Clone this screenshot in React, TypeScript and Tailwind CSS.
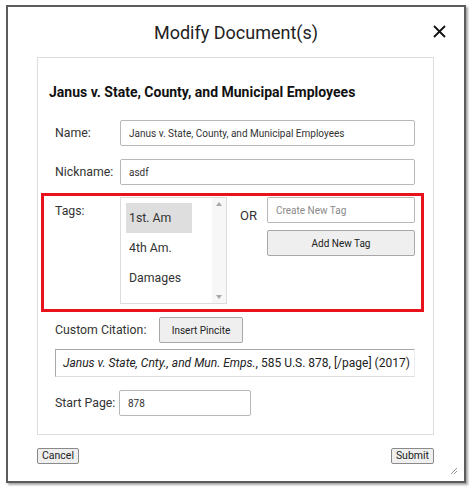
import React from 'react';

const font = "font-['Roboto','Liberation_Sans',sans-serif]";

function TextBox({ value, placeholder, width }: { value?: string; placeholder?: string; width: string }) {
  return (
    <div
      className={`${width} h-[26px] border border-[#b8b8b8] rounded-[2px] bg-white flex items-center px-[8px] text-[10px] text-[#333]`}
    >
      {value ? value : <span className="text-[10px] text-[#8a8a8a]">{placeholder}</span>}
    </div>
  );
}

function Triangle({ up }: { up?: boolean }) {
  return (
    <svg width="6" height="4" viewBox="0 0 6 4">
      <path d={up ? 'M0 4 L3 0 L6 4 Z' : 'M0 0 L3 4 L6 0 Z'} fill="#a8a8a8" />
    </svg>
  );
}

export default function App() {
  const tags = ['1st. Am', '4th Am.', 'Damages'];

  return (
    <div className={`w-[474px] h-[488px] bg-white pt-[5px] pl-[6px] ${font}`}>
      <div className="relative w-[460px] h-[478px] border-2 border-[#5c5c5c] bg-white shadow-[2px_2px_2px_rgba(0,0,0,0.35)]">
        {/* title */}
        <div className="h-[50px] flex items-center justify-center text-[18px] text-[#222]">
          Modify Document(s)
        </div>
        <button className="absolute top-[17px] right-[18px] w-[14px] h-[14px] flex items-center justify-center">
          <svg width="13" height="13" viewBox="0 0 13 13">
            <path d="M1 1 L12 12 M12 1 L1 12" stroke="#111" strokeWidth="1.8" />
          </svg>
        </button>

        {/* form panel */}
        <div className="ml-[29px] w-[397px] h-[378px] border border-[#dddddd] pt-[24px]">
          <div className="ml-[11px] h-[20px] leading-[20px] text-[14px] font-bold text-[#111]">
            Janus v. State, County, and Municipal Employees
          </div>

          <div className="mt-[18px] ml-[17px] flex items-center">
            <div className="w-[65px] text-[12.3px] text-[#333]">Name:</div>
            <TextBox width="w-[295px]" value="Janus v. State, County, and Municipal Employees" />
          </div>

          <div className="mt-[13px] ml-[17px] flex items-center">
            <div className="w-[65px] text-[12.3px] text-[#333]">Nickname:</div>
            <TextBox width="w-[295px]" value="asdf" />
          </div>

          {/* tags, marked in red */}
          <div className="mt-[8px] ml-[3px] w-[383px] h-[119px] border-[3px] border-[#e8121d] pt-[1px] pl-[11px] flex">
            <div className="w-[65px] pt-[4px] text-[12.3px] leading-[20px] text-[#333]">Tags:</div>
            <div className="w-[107px] h-[107px] border border-[#dcdcdc] flex">
              <div className="flex-1 pt-[5px] pl-[5px]">
                {tags.map((t, i) => (
                  <div
                    key={t}
                    className={`h-[30px] w-[66px] flex items-center pl-[3px] text-[12.3px] text-[#333] ${
                      i === 0 ? 'bg-[#dedede]' : ''
                    }`}
                  >
                    {t}
                  </div>
                ))}
              </div>
              <div className="w-[14px] bg-[#f7f7f7] flex flex-col items-center justify-between py-[4px]">
                <Triangle up />
                <Triangle />
              </div>
            </div>
            <div className="ml-[13px] mt-[9px] w-[20px] h-[20px] leading-[20px] text-[13px] text-[#333]">OR</div>
            <div className="ml-[7px] flex flex-col gap-[7px]">
              <TextBox width="w-[148px]" placeholder="Create New Tag" />
              <button className="w-[148px] h-[26px] border border-[#a8a8a8] rounded-[2px] bg-[#efefef] text-[10px] text-[#222]">
                Add New Tag
              </button>
            </div>
          </div>

          <div className="mt-[5px] ml-[17px] flex items-center">
            <div className="w-[104px] text-[12.3px] text-[#333]">Custom Citation:</div>
            <button className="w-[84px] h-[26px] border border-[#a8a8a8] rounded-[2px] bg-[#efefef] text-[10px] text-[#222]">
              Insert Pincite
            </button>
          </div>

          <div className="mt-[6px] ml-[17px] w-[360px] h-[28px] border border-t-[#a9a9a9] border-l-[#a9a9a9] border-r-[#ececec] border-b-[#dedede] flex items-center pl-[7px] text-[12px] text-[#222] whitespace-nowrap overflow-hidden">
            <span className="italic">Janus v. State, Cnty., and Mun. Emps.</span>, 585 U.S. 878, [/page] (2017)
          </div>

          <div className="mt-[13px] ml-[17px] flex items-center">
            <div className="w-[64px] text-[12.3px] text-[#333]">Start Page:</div>
            <TextBox width="w-[132px]" value="878" />
          </div>
        </div>

        {/* footer */}
        <div className="mt-[13px] ml-[29px] w-[397px] flex justify-between">
          <button className="h-[16px] px-[4px] border border-[#8a8a8a] rounded-[2px] bg-[#efefef] text-[10.5px] leading-[14px] text-[#222]">
            Cancel
          </button>
          <button className="h-[16px] px-[4px] border border-[#8a8a8a] rounded-[2px] bg-[#efefef] text-[10.5px] leading-[14px] text-[#222]">
            Submit
          </button>
        </div>

        <svg className="absolute right-[6px] bottom-[6px]" width="8" height="8" viewBox="0 0 8 8">
          <path d="M1 7 L7 1 M4 7 L7 4" stroke="#9a9a9a" strokeWidth="1" />
        </svg>
      </div>
    </div>
  );
}
